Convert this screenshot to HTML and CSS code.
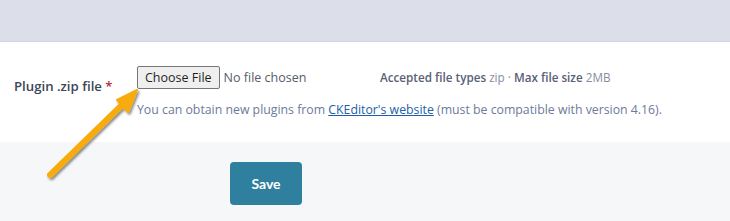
FILE: index.html
```html
<!DOCTYPE html>
<html lang="en">

<head>
  <meta charset="UTF-8" />
  <meta name="viewport" content="width=device-width, initial-scale=1.0" />
  <title>Install plugin</title>
  <link rel="stylesheet" href="styles.css">
</head>

<body>

  <div class="topbar"></div>

  <section class="form-row">
    <label class="field-label" for="plugin-file">Plugin .zip file <span class="req">*</span></label>
    <div class="field">
      <div class="field-top">
        <div class="file-input">
          <span class="file-btn">Choose File</span>
          <span class="file-name">No file chosen</span>
        </div>
        <div class="file-meta">
          <b>Accepted file types</b> zip &middot; <b>Max file size</b> 2MB
        </div>
      </div>
      <p class="help">You can obtain new plugins from <a href="#">CKEditor's website</a> (must be compatible with version 4.16).</p>
    </div>
  </section>

  <section class="actions">
    <button class="save">Save</button>
  </section>

  <!-- annotation arrow -->
  <svg class="arrow" width="150" height="200" viewBox="0 0 150 200">
    <defs>
      <filter id="shadow" x="-20%" y="-20%" width="140%" height="140%">
        <feDropShadow dx="1.5" dy="2" stdDeviation="1.2" flood-color="#000" flood-opacity="0.45" />
      </filter>
    </defs>
    <g filter="url(#shadow)">
      <line x1="50" y1="175" x2="124" y2="103" stroke="#f7ab0a" stroke-width="6" stroke-linecap="round" />
      <polygon points="137,90 117,100 128,112" fill="#f7ab0a" stroke="#f7ab0a" stroke-width="2" stroke-linejoin="round" />
    </g>
  </svg>

</body>

</html>
```

FILE: styles.css
```css
* {
  box-sizing: border-box;
  margin: 0;
  padding: 0;
}

body {
  font-family: "Open Sans", sans-serif;
  color: #3b4658;
  background: #f5f7f9;
  position: relative;
  width: 730px;
  height: 221px;
  overflow: hidden;
}

.topbar {
  height: 42px;
  background: #dcdeea;
  border-bottom: 1px solid #d0d3e2;
}

.form-row {
  background: #fff;
  height: 100px;
  display: flex;
  padding: 24px 0 0 14px;
}

.field-label {
  width: 123px;
  font-size: 13.2px;
  font-weight: 600;
  color: #3b4658;
  padding-top: 11px;
}

.req {
  color: #b3263a;
}

.field-top {
  display: flex;
  align-items: center;
}

.file-input {
  display: flex;
  align-items: center;
  width: 243px;
}

.file-btn {
  display: inline-block;
  height: 23px;
  line-height: 21px;
  padding: 0 7px;
  font-size: 12.5px;
  color: #1f1f1f;
  background: #efefef;
  border: 1px solid #767676;
  border-radius: 2px;
}

.file-name {
  margin-left: 4px;
  font-size: 12.5px;
  color: #555c6a;
}

.file-meta {
  font-size: 11.7px;
  color: #858d9e;
  margin-top: -2px;
}

.file-meta b {
  font-weight: 600;
  color: #596075;
}

.help {
  margin-top: 12px;
  font-size: 12.3px;
  color: #6c7a9c;
}

.help a {
  color: #1d5ea8;
  text-decoration: underline;
}

.actions {
  padding: 20px 0 0 230px;
}

.save {
  width: 72px;
  height: 43px;
  border: none;
  border-radius: 4px;
  background: #2e809e;
  color: #fff;
  font-family: "Lato", sans-serif;
  font-weight: 700;
  font-size: 14px;
}

.arrow {
  position: absolute;
  left: 0;
  top: 0;
}
```
